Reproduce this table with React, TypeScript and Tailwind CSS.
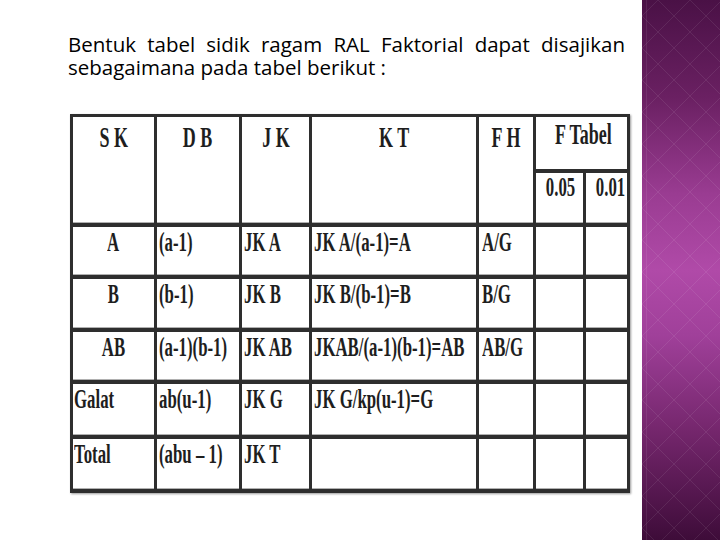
import React from "react";

const serif = { fontFamily: '"Liberation Serif", "Times New Roman", serif' };

function T({ children, center = false, size = "text-[28px]" }: { children: React.ReactNode; center?: boolean; size?: string }) {
  return (
    <span
      className={`inline-block whitespace-nowrap font-bold leading-none text-[#1e1e1e] ${size} ${center ? "origin-center" : "origin-left"} scale-x-[0.6]`}
      style={serif}
    >
      {children}
    </span>
  );
}

function Cell({ children, center = false, className = "" }: { children?: React.ReactNode; center?: boolean; className?: string }) {
  return (
    <div className={`bg-white overflow-visible whitespace-nowrap pt-[1px] shadow-[inset_0_-1px_0_#b0b0b0] ${center ? "text-center" : "pl-[1px]"} ${className}`}>
      {children}
    </div>
  );
}

export default function App() {
  const rows: [string, string, string, string, string, boolean][] = [
    ["A", "(a-1)", "JK A", "JK A/(a-1)=A", "A/G", true],
    ["B", "(b-1)", "JK B", "JK B/(b-1)=B", "B/G", true],
    ["AB", "(a-1)(b-1)", "JK AB", "JKAB/(a-1)(b-1)=AB", "AB/G", true],
    ["Galat", "ab(u-1)", "JK G", "JK G/kp(u-1)=G", "", false],
    ["Total", "(abu \u2013 1)", "JK T", "", "", false],
  ];
  return (
    <div className="w-[720px] h-[540px] flex bg-white overflow-hidden">
      <div className="w-[642px] h-full pt-[33px] pl-[68px] pr-[17px]">
        <div
          className="text-[20.5px] leading-[23px] text-black"
          style={{ fontFamily: '"Open Sans", "Noto Sans", sans-serif' }}
        >
          <div className="text-justify [text-align-last:justify] whitespace-nowrap">
            Bentuk tabel sidik ragam RAL Faktorial dapat disajikan
          </div>
          <div>sebagaimana pada tabel berikut :</div>
        </div>
        <div className="mt-[35px] ml-[2px] w-[560px] bg-[#2e2e2e] p-[3px] pb-[4px] grid grid-cols-[81px_82px_67px_164px_54px_47px_41px] grid-rows-[52px_50px_48px_49px_48px_51px_50px] gap-x-[3px] gap-y-[4px] shadow-[1px_1px_2px_#9a9a9a]">
          <div className="row-span-2 bg-white text-center pt-[5px] shadow-[inset_0_-1px_0_#b0b0b0]">
            <T center size="text-[30px]">S K</T>
          </div>
          <div className="row-span-2 bg-white text-center pt-[5px] shadow-[inset_0_-1px_0_#b0b0b0]">
            <T center size="text-[30px]">D B</T>
          </div>
          <div className="row-span-2 bg-white text-center pt-[5px] shadow-[inset_0_-1px_0_#b0b0b0]">
            <T center size="text-[30px]">J K</T>
          </div>
          <div className="row-span-2 bg-white text-center pt-[5px] shadow-[inset_0_-1px_0_#b0b0b0]">
            <T center size="text-[30px]">K T</T>
          </div>
          <div className="row-span-2 bg-white text-center pt-[5px] shadow-[inset_0_-1px_0_#b0b0b0]">
            <T center size="text-[30px]">F H</T>
          </div>
          <div className="col-span-2 bg-white text-center pt-[2px]">
            <T center size="text-[30px]">F Tabel</T>
          </div>
          <div className="bg-white text-center pt-[0px] shadow-[inset_0_-1px_0_#b0b0b0]">
            <T center size="text-[28px]">0.05</T>
          </div>
          <div className="bg-white text-center pt-[0px] shadow-[inset_0_-1px_0_#b0b0b0]">
            <T center size="text-[28px]">0.01</T>
          </div>
          {rows.map((r) => (
            <React.Fragment key={r[0]}>
              <Cell center={r[5]}>
                <T center={r[5]}>{r[0]}</T>
              </Cell>
              <Cell className="pl-[2px]">
                <T>{r[1]}</T>
              </Cell>
              <Cell className="pl-[2px]">
                <T>{r[2]}</T>
              </Cell>
              <Cell className="pl-[2px]">
                <T>{r[3]}</T>
              </Cell>
              <Cell className="pl-[3px]">
                <T>{r[4]}</T>
              </Cell>
              <Cell />
              <Cell />
            </React.Fragment>
          ))}
        </div>
      </div>
      <div className="relative w-[78px] h-full bg-[linear-gradient(to_bottom,#4a1146_0%,#6a2062_18%,#9a3c92_36%,#b04aa8_50%,#a0409a_62%,#74266c_80%,#3e0c39_100%)]">
        <div className="absolute left-[4px] top-0 h-full w-[1px] bg-[#ffffff] opacity-[0.08]" />
        <svg className="absolute inset-0 opacity-[0.08]" width="78" height="540">
          <defs>
            <pattern id="dia" width="32" height="32" patternUnits="userSpaceOnUse">
              <path d="M16 0 L32 16 L16 32 L0 16 Z" fill="none" stroke="#ffffff" strokeWidth="1" />
            </pattern>
          </defs>
          <rect width="78" height="540" fill="url(#dia)" />
        </svg>
      </div>
    </div>
  );
}
